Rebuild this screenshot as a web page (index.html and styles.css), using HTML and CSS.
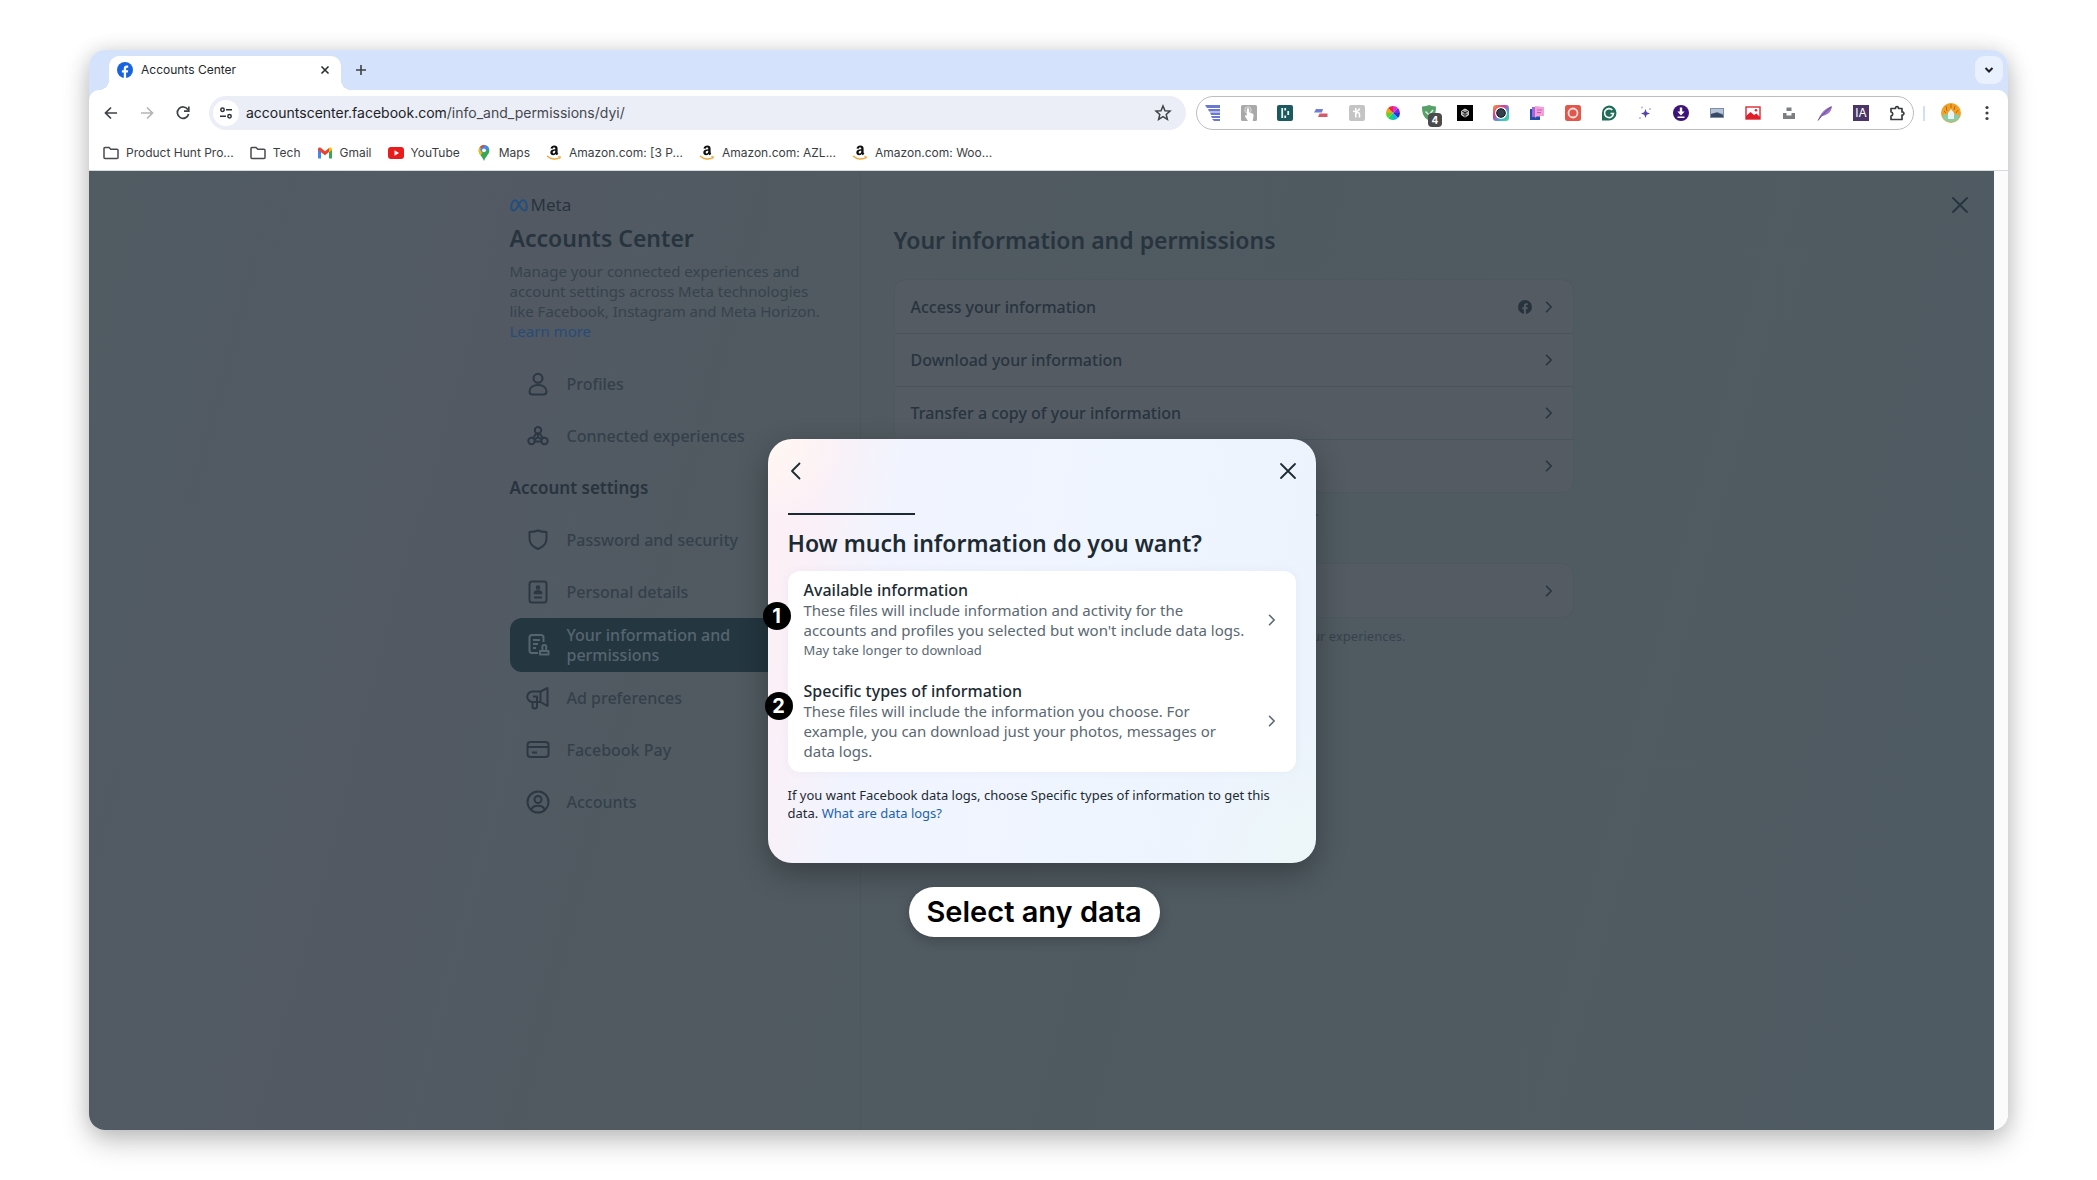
FILE: index.html
```html
<!DOCTYPE html>
<html lang="en">
<head>
<meta charset="utf-8">
<title>Accounts Center</title>
<link rel="stylesheet" href="styles.css">
</head>
<body>
<svg class="sprite" aria-hidden="true">
  <symbol id="chevron" viewBox="0 0 16 16"><path d="M5.500 3.300 10.200 8l-4.700 4.700" fill="none" stroke="currentColor" stroke-width="1.600" stroke-linecap="round" stroke-linejoin="round"/></symbol>
  <symbol id="cross" viewBox="0 0 18 18"><path d="M2 2l14 14M16 2 2 16" fill="none" stroke="currentColor" stroke-width="1.800" stroke-linecap="round"/></symbol>
  <symbol id="folder" viewBox="0 0 16 16"><path d="M1 3.500a1 1 0 0 1 1-1h4l1.800 1.800H14a1 1 0 0 1 1 1v7.200a1 1 0 0 1-1 1H2a1 1 0 0 1-1-1z" fill="none" stroke="#474a4e" stroke-width="1.500"/></symbol>
  <symbol id="facebook" viewBox="0 0 16 16"><circle cx="8" cy="8" r="8" fill="currentColor"/><path d="M6.800 16v-5.400H4.900V8.200h1.900V6.700c0-2 1.100-3.100 2.900-3.100.6 0 1.200.1 1.500.2v2h-1c-.8 0-1.100.4-1.100 1.100v1.300h2.100l-.4 2.400H9.100V16z" fill="var(--mark)"/></symbol>
  <symbol id="amazon" viewBox="0 0 16 16"><path d="M9.300 4.200c0-1-.2-1.600-1.200-1.600-.9 0-1.300.5-1.400 1.200l-2.200-.2C4.800 1.500 6.500.6 8.300.6c2.200 0 3.300 1.100 3.300 3.100v3.200c0 .9.300 1.200.8 1.900L10.700 10.200c-.4-.3-.8-.8-1-1.200-.7.8-1.400 1.200-2.500 1.200-1.700 0-2.900-1-2.900-2.700 0-2.300 1.900-3.200 5-3.300zm0 1.600c-1.700 0-2.600.5-2.600 1.500 0 .8.400 1.200 1 1.200 1.100 0 1.600-.9 1.600-2.700z" fill="#111"/><path d="M1.500 11.300c3.500 3.400 9 3.600 12.500 1.200" fill="none" stroke="#f1a93b" stroke-width="1.500" stroke-linecap="round"/><path d="M12.300 11.500c1.400-.4 2.200-.1 2.100.3 0 .6-.3 1.300-.8 1.900" fill="none" stroke="#f1a93b"/></symbol>
</svg>

<div class="window">
  <header class="chrome">
    <div class="tabstrip">
      <div class="tab">
        <svg class="favicon" width="16" height="16"><use href="#facebook"/></svg>
        <span class="tab-title">Accounts Center</span>
        <button class="plain" type="button" aria-label="Close tab"><svg width="10" height="10" viewBox="0 0 10 10"><path d="M1.500 1.500l7 7M8.500 1.500l-7 7" stroke="#2b2d30" stroke-width="1.600"/></svg></button>
      </div>
      <button class="plain" type="button" aria-label="New tab"><svg width="12" height="12" viewBox="0 0 12 12"><path d="M6 1v10M1 6h10" stroke="#3c4043" stroke-width="1.600"/></svg></button>
      <button class="tab-search" type="button" aria-label="Search tabs"><svg width="10" height="10" viewBox="0 0 10 10"><path d="M1.500 3 5 6.500 8.500 3" fill="none" stroke="#202124" stroke-width="2"/></svg></button>
    </div>

    <div class="toolbar">
      <div class="nav-buttons">
        <button class="plain" type="button" aria-label="Back"><svg width="16" height="16" viewBox="0 0 16 16"><path d="M14 8H3M8 2.500 2.500 8 8 13.500" fill="none" stroke="#3f4246" stroke-width="1.700"/></svg></button>
        <button class="plain" type="button" aria-label="Forward"><svg width="16" height="16" viewBox="0 0 16 16"><path d="M2 8h11M8 2.500 13.500 8 8 13.500" fill="none" stroke="#b3b5b8" stroke-width="1.700"/></svg></button>
        <button class="plain" type="button" aria-label="Reload"><svg width="16" height="16" viewBox="0 0 16 16"><path d="M13 4.800A5.700 5.700 0 1 0 13.600 9" fill="none" stroke="#3f4246" stroke-width="1.700"/><path d="M13.800 1.500v4.700H9" fill="none" stroke="#3f4246" stroke-width="1.700"/></svg></button>
      </div>
      <div class="omnibox">
        <span class="site-info"><svg width="14" height="14" viewBox="0 0 14 14" fill="none" stroke="#2f3236" stroke-width="1.500"><circle cx="3.500" cy="3.700" r="1.700"/><path d="M7 3.700h6M1 10.300h6"/><circle cx="10.500" cy="10.300" r="1.700"/></svg></span>
        <span class="url">accountscenter.facebook.com<span class="path">/info_and_permissions/dyi/</span></span>
        <button class="plain" type="button" aria-label="Bookmark this tab"><svg width="18" height="18" viewBox="0 0 18 18"><path d="M9 2l2 4.700 5 .4-3.800 3.300 1.200 5L9 12.700l-4.400 2.700 1.200-5L2 7.100l5-.4z" fill="none" stroke="#3f4246" stroke-width="1.500"/></svg></button>
      </div>
      <div class="extensions">
        <svg width="16" height="16" viewBox="0 0 16 16"><g fill="#6b78d0"><path d="M0 0h15v3H2zM3 4h12v2.500H4zM5 7.600h10V10H6zM6 11h9v2H7zM7 14h8v2H9z"/></g></svg>
        <svg width="16" height="16" viewBox="0 0 16 16"><rect width="16" height="16" rx="1.500" fill="#a9a9a9"/><circle cx="7" cy="5" r="3.200" fill="none" stroke="#ddd"/><path d="M5.800 4.500c0-1.600 2.400-1.600 2.400 0v3l3.300.9c1 .4 1.200 1.300 1 2.600L11.700 16H7L4 11.500c-.3-1.200.9-1.500 1.800-.7z" fill="#fff"/></svg>
        <svg width="16" height="16" viewBox="0 0 16 16"><rect width="16" height="16" rx="2" fill="#1d5a5f"/><path d="M5.200 3v10M8.200 3v2.500M8.200 10.500V13" stroke="#e8f5f3" stroke-width="1.800"/><path d="M11.200 6v4" stroke="#e8f5f3" stroke-width="1.800"/></svg>
        <svg width="16" height="16" viewBox="0 0 16 16"><path d="M3 4h7l-1 3.500H1z" fill="#6e7ed6"/><path d="M6.500 8.500h8v3.500H5z" fill="#d8596b"/></svg>
        <svg width="16" height="16" viewBox="0 0 16 16"><rect width="16" height="16" rx="2" fill="#c4c4c4"/><path d="M6.800 3v9.500M6.800 9c.8-2 3.700-2 3.700.2v3.300M4 6.300c3.500.5 6-.6 6.500-3" fill="none" stroke="#fff" stroke-width="1.500"/></svg>
        <svg width="16" height="16" viewBox="0 0 16 16"><path d="M8 8V1a7 7 0 0 1 5 2z" fill="#e22bd0"/><path d="M8 8l5-5a7 7 0 0 1 2 5z" fill="#7d2ae8"/><path d="M8 8h7a7 7 0 0 1-2 5z" fill="#2433d8"/><path d="M8 8l5 5a7 7 0 0 1-5 2z" fill="#12b6e8"/><path d="M8 8v7a7 7 0 0 1-5-2z" fill="#18cf7a"/><path d="M8 8l-5 5a7 7 0 0 1-2-5z" fill="#5ed422"/><path d="M8 8H1a7 7 0 0 1 2-5z" fill="#f0a316"/><path d="M8 8L3 3a7 7 0 0 1 5-2z" fill="#ea2c3a"/></svg>
        <span class="ext-badged"><svg width="16" height="16" viewBox="0 0 16 16"><path d="M1 1.500C4 1.500 6 .5 8 0c2 .5 4 1.500 7 1.500 0 6-1 11-7 14C2 12.500 1 7.500 1 1.500z" fill="#57a169"/><path d="M4.500 6.500 8 10l4-5" fill="none" stroke="#d9efdd" stroke-width="1.500"/></svg><span class="ext-count">4</span></span>
        <svg width="16" height="16" viewBox="0 0 16 16"><rect width="16" height="16" fill="#000"/><path d="M8 4l3.300 1.900v4.200L8 12l-3.300-1.900V5.900z" fill="#9a9a9a" stroke="#e4e4e4"/><path d="M5 6l3 1.800L11 6M8 8v4M6.300 9.300v.8M9.700 9.300v.8" fill="none" stroke="#111" stroke-width=".9"/></svg>
        <svg width="16" height="16" viewBox="0 0 16 16"><defs><linearGradient id="lens" x1="0" y1="0" x2="1" y2="1"><stop stop-color="#f7a324"/><stop offset=".35" stop-color="#e0389b"/><stop offset=".7" stop-color="#32b7e6"/><stop offset="1" stop-color="#5ddc74"/></linearGradient></defs><rect width="16" height="16" rx="3" fill="url(#lens)"/><circle cx="8" cy="8" r="6" fill="#fff"/><circle cx="8" cy="8" r="4.300" fill="#33414e" stroke="#111" stroke-width="1"/></svg>
        <svg width="16" height="16" viewBox="0 0 16 16"><path d="M1 4h4v8h6v3H1z" fill="#1f4ea8"/><path d="M3 2h8v10H3z" fill="#a963d8"/><path d="M6 1l9 1v9H8l-2 2z" fill="#f2a0d8"/><path d="M8 5h5M8 7.500h4" stroke="#c65cb8"/></svg>
        <svg width="16" height="16" viewBox="0 0 16 16"><rect width="16" height="16" rx="2.500" fill="#e2574b"/><circle cx="8" cy="8" r="4.500" fill="none" stroke="#fbe1dc" stroke-width="1.800"/></svg>
        <svg width="16" height="16" viewBox="0 0 16 16"><path d="M8 .5A7.500 7.500 0 1 1 8 15.500H1V8A7.500 7.500 0 0 1 8 .5z" fill="#1f6d58"/><path d="M11.300 5A4.500 4.500 0 1 0 12.500 8.500H9.500" fill="none" stroke="#fff" stroke-width="1.600"/></svg>
        <svg width="16" height="16" viewBox="0 0 16 16"><path d="M8.500 4l1.200 3.300L13 8.500l-3.300 1.200L8.500 13 7.300 9.700 4 8.500l3.300-1.200z" fill="#5540ae"/><g fill="#b9aee6"><circle cx="5" cy="2.500" r="1"/><circle cx="13" cy="4" r="1"/><circle cx="3" cy="13" r="1"/></g></svg>
        <svg width="16" height="16" viewBox="0 0 16 16"><circle cx="8" cy="8" r="8" fill="#3c1378"/><path d="M8 2.500v5" stroke="#fff" stroke-width="2.400"/><path d="M4.300 6.500h7.400L8 10.500z" fill="#fff"/><path d="M4.500 12.200h7" stroke="#fff" stroke-width="1.600"/></svg>
        <svg width="16" height="16" viewBox="0 0 16 16"><rect x="1" y="3" width="14" height="10" fill="#7d8ea8"/><path d="M2 4h12v5l-6-2-6 2z" fill="#b7c4d8"/><path d="M2 9l6-1.500L14 10v2H2z" fill="#374a63"/></svg>
        <svg width="16" height="16" viewBox="0 0 16 16"><rect x="1" y="2" width="14" height="12" fill="#fff" stroke="#d62b36" stroke-width="1.400"/><path d="M1 14v-3l4.500-4 3.500 3 2.500-1.500L15 12v2z" fill="#e01f2b"/><circle cx="11" cy="5.200" r="1.300" fill="#d62b36"/></svg>
        <svg width="16" height="16" viewBox="0 0 16 16"><path d="M5.500 2.500h5v3.500h-5zM2 8h3.500v2.500h5V8H14v6H2z" fill="#7c7f82"/></svg>
        <svg width="16" height="16" viewBox="0 0 16 16"><path d="M1 15.500C3 9 8 3 15 1c0 4-3 9-10 10z" fill="#9a77c4"/><path d="M1 15.500C5 10 9 6 14 2" fill="none" stroke="#5e3c8f" stroke-width=".9"/></svg>
        <span class="ext-ia">IA</span>
        <svg width="16" height="16" viewBox="0 0 16 16"><path d="M2 3.500h4.500c-.5-2.500 3.500-2.500 3 0h3.500v3.500c2.500-.5 2.500 3.500 0 3v4.500H2v-3.500c2.300-.3 2.300-3.700 0-4z" fill="none" stroke="#3a3c40" stroke-width="1.700" stroke-linejoin="round"/></svg>
      </div>
      <span class="divider"></span>
      <svg class="avatar" width="20" height="20" viewBox="0 0 20 20"><circle cx="10" cy="10" r="10" fill="#f2a126"/><path d="M1 13.500C4 10 6 12 8 11l5 0c2 0 4 .5 6 2.500A10 10 0 0 1 1 13.500z" fill="#8ccba6"/><path d="M10 6l3 4v6H7v-6z" fill="#e8f4f5"/><path d="M5 3l1 5M14 3l-1 4M10 1v4M3 8l2 2M17 7l-2 3" stroke="#b56a12"/></svg>
      <button class="plain" type="button" aria-label="Menu"><svg width="4" height="16" viewBox="0 0 4 16" fill="#3f4246"><circle cx="2" cy="2.500" r="1.600"/><circle cx="2" cy="8" r="1.600"/><circle cx="2" cy="13.500" r="1.600"/></svg></button>
    </div>

    <nav class="bookmarks">
      <a href="#"><svg width="16" height="16"><use href="#folder"/></svg>Product Hunt Pro...</a>
      <a href="#"><svg width="16" height="16"><use href="#folder"/></svg>Tech</a>
      <a href="#"><svg width="16" height="16" viewBox="0 0 16 16"><path d="M1 4v9.500h3V7z" fill="#4285f4"/><path d="M15 4v9.500h-3V7z" fill="#34a853"/><path d="M1 4.300C1 2.600 2.800 2 4 3l4 3.200L12 3v4L8 10.200 1 5z" fill="#ea4335"/><path d="M12 3c1.200-1 3-.4 3 1.300V5l-3 2.300z" fill="#fbbc04"/></svg>Gmail</a>
      <a href="#"><svg width="16" height="16" viewBox="0 0 16 16"><rect y="2" width="16" height="12" rx="3" fill="#e81c1c"/><path d="M6.500 5.300 11 8l-4.500 2.700z" fill="#fff"/></svg>YouTube</a>
      <a href="#"><svg width="16" height="16" viewBox="0 0 16 16"><path d="M8 0a5.300 5.300 0 0 1 5.300 5.400C13.300 9.500 9.500 11 8 16 6.500 11 2.700 9.500 2.700 5.400A5.300 5.300 0 0 1 8 0z" fill="#34a853"/><path d="M2.700 5.400A5.300 5.300 0 0 1 4 2l4 3.400-3.600 5C3.300 8.800 2.700 7.500 2.700 5.400z" fill="#fbbc04"/><path d="M4 2A5.300 5.300 0 0 1 8 0l1.500.2L6 4z" fill="#ea4335"/><path d="M9.500.2c2 .6 3.800 2.600 3.800 5.200L10 4 6 8l-2-4z" fill="#4285f4"/><circle cx="8" cy="5.300" r="1.900" fill="#fff"/></svg>Maps</a>
      <a href="#"><svg width="16" height="16"><use href="#amazon"/></svg>Amazon.com: [3 P...</a>
      <a href="#"><svg width="16" height="16"><use href="#amazon"/></svg>Amazon.com: AZL...</a>
      <a href="#"><svg width="16" height="16"><use href="#amazon"/></svg>Amazon.com: Woo...</a>
    </nav>
  </header>

  <div class="viewport">
    <div class="page">
      <div class="columns">
        <aside class="sidebar">
          <div class="meta"><svg width="18" height="13" viewBox="0 0 18 13"><path d="M1.200 8.500C1.200 5 2.700 1.300 5 1.300c3.500 0 5.200 10.200 9.300 10.200 1.700 0 2.500-1.300 2.500-3.500 0-3.700-1.500-6.700-3.800-6.700-3.800 0-5.300 10.200-9.300 10.200-1.700 0-2.500-1-2.500-3z" fill="none" stroke="#244f7d" stroke-width="2"/></svg>Meta</div>
          <h1>Accounts Center</h1>
          <p>Manage your connected experiences and account settings across Meta technologies like Facebook, Instagram and Meta Horizon. <a href="#">Learn more</a></p>
          <nav class="menu">
            <a href="#"><svg viewBox="0 0 24 24"><circle cx="12" cy="6.300" r="4.500"/><path d="M3.500 19.500c0-4 3.500-6.500 8.500-6.500s8.500 2.500 8.500 6.500c0 2-1 3-3 3h-11c-2 0-3-1-3-3z"/></svg>Profiles</a>
            <a href="#"><svg viewBox="0 0 24 24"><circle cx="12" cy="6.300" r="3.200"/><circle cx="5.500" cy="17" r="3.200"/><circle cx="18.500" cy="17" r="3.200"/><path d="M10.500 9.300 7 14M13.500 9.300 17 14M8.700 17.500h6.600M12 9.500V13M12 13l-3.500 2.500M12 13l3.500 2.500"/></svg>Connected experiences</a>
            <h2>Account settings</h2>
            <a href="#"><svg viewBox="0 0 24 24"><path d="M12 2.500c3 1.300 5.500 1.500 8.500 1.500v6.500c0 5-3.500 8.500-8.500 10.500-5-2-8.500-5.500-8.500-10.500V4c3 0 5.500-.2 8.500-1.500z"/></svg>Password and security</a>
            <a href="#"><svg viewBox="0 0 24 24"><rect x="3.500" y="1.500" width="17" height="21" rx="2.500"/><circle cx="12" cy="7.500" r="1.300"/><path d="M8.500 13.300c.5-3 6.500-3 7 0zM8 17.500h8"/></svg>Personal details</a>
            <a href="#" class="current" aria-current="page"><svg viewBox="0 0 24 24"><path d="M12 20H6c-1.500 0-2.500-1-2.500-2.500v-13C3.500 3 4.500 2 6 2h9c1.500 0 2.500 1 2.500 2.500V9M7 7h7M7 11h5M7 15h3"/><path d="M14 21.500V18h8.500v3.500zM16.300 18c.6-1.500 0-2.500 0-4 0-2.700 4-2.700 4 0 0 1.500-.6 2.500 0 4"/></svg>Your information and permissions</a>
            <a href="#"><svg viewBox="0 0 24 24"><path d="M14.500 5.500 21.500 2v18l-7-4H6.500a5 5 0 0 1 0-10.500zM14.500 5.500V16M6.500 16v4.500c0 2.500 4.500 2.500 4.500 0V10.500H7"/></svg>Ad preferences</a>
            <a href="#"><svg viewBox="0 0 24 24"><rect x="1.500" y="4" width="21" height="15" rx="3"/><path d="M1.500 9h21M6 14.500h5"/></svg>Facebook Pay</a>
            <a href="#"><svg viewBox="0 0 24 24"><circle cx="12" cy="12" r="10.500"/><circle cx="12" cy="9.500" r="3.500"/><path d="M5.500 19.500c1.500-5 11.500-5 13 0"/></svg>Accounts</a>
          </nav>
        </aside>

        <main class="content">
          <h1>Your information and permissions</h1>
          <div class="list">
            <a href="#"><span>Access your information</span><svg class="fb" width="14" height="14"><use href="#facebook"/></svg><svg width="16" height="16"><use href="#chevron"/></svg></a>
            <a href="#"><span>Download your information</span><svg width="16" height="16"><use href="#chevron"/></svg></a>
            <a href="#"><span>Transfer a copy of your information</span><svg width="16" height="16"><use href="#chevron"/></svg></a>
            <a href="#" aria-label="Search history"><span></span><svg width="16" height="16"><use href="#chevron"/></svg></a>
          </div>
          <p class="caption short">View, download or transfer your information and activity on our apps.</p>
          <div class="list">
            <a href="#" aria-label="Your activity"><span></span><svg width="16" height="16"><use href="#chevron"/></svg></a>
          </div>
          <p class="caption long">Control what information Meta technologies can use to influence your experiences.</p>
        </main>
      </div>

      <button class="plain page-close" type="button" aria-label="Close"><svg width="18" height="18"><use href="#cross"/></svg></button>

      <div class="overlay">
        <section class="dialog" role="dialog" aria-labelledby="dialog-title">
          <div class="dialog-bar">
            <button class="plain" type="button" aria-label="Back"><svg width="18" height="18" viewBox="0 0 18 18"><path d="M12.500 1.500 5 9l7.500 7.500" fill="none" stroke="currentColor" stroke-width="1.800" stroke-linecap="round" stroke-linejoin="round"/></svg></button>
            <button class="plain" type="button" aria-label="Close"><svg width="18" height="18"><use href="#cross"/></svg></button>
          </div>
          <div class="progress"></div>
          <h2 id="dialog-title">How much information do you want?</h2>
          <div class="options">
            <a href="#"><span class="option-text"><strong>Available information</strong><span>These files will include information and activity for the accounts and profiles you selected but won't include data logs.</span><small>May take longer to download</small></span><svg width="16" height="16"><use href="#chevron"/></svg></a>
            <a href="#"><span class="option-text"><strong>Specific types of information</strong><span>These files will include the information you choose. For example, you can download just your photos, messages or data logs.</span></span><svg width="16" height="16"><use href="#chevron"/></svg></a>
          </div>
          <p>If you want Facebook data logs, choose Specific types of information to get this data. <a href="#">What are data logs?</a></p>
          <span class="step step-one">1</span>
          <span class="step step-two">2</span>
          <span class="callout">Select any data</span>
        </section>
      </div>
    </div>
  </div>
</div>
</body>
</html>
```
FILE: styles.css
```css
* { box-sizing: border-box; }

body {
  margin: 0;
  padding: 50px 89px;
  background: #fff;
  font-family: Inter, "Liberation Sans", sans-serif;
}

h1, h2, p { margin: 0; }
a { color: inherit; text-decoration: none; }
svg { display: block; flex: none; }
.sprite { position: absolute; width: 0; height: 0; }

.plain {
  display: flex;
  padding: 0;
  border: 0;
  background: none;
  color: inherit;
}

.window {
  display: flex;
  flex-direction: column;
  min-height: calc(100vh - 100px);
  border-radius: 16px;
  overflow: hidden;
  background: #fff;
  box-shadow: 0 12px 28px rgba(0, 0, 0, .22), 0 0 20px rgba(0, 0, 0, .12);
}

/* Browser chrome */
.chrome { border-bottom: 1px solid #d5dae2; background: #d4e2fc; }

.tabstrip {
  display: flex;
  align-items: center;
  height: 40px;
  padding: 6px 5px 0 20px;
  gap: 14px;
}
.tab {
  position: relative;
  display: flex;
  align-items: center;
  gap: 8px;
  width: 232px;
  height: 34px;
  padding: 0 11px 6px 8px;
  border-radius: 10px 10px 0 0;
  background: #fff;
}
.tab::before, .tab::after {
  content: "";
  position: absolute;
  bottom: 0;
  width: 10px;
  height: 10px;
}
.tab::before { left: -10px; background: radial-gradient(circle at 0 0, transparent 10px, #fff 10px); }
.tab::after { right: -10px; background: radial-gradient(circle at 100% 0, transparent 10px, #fff 10px); }
.favicon { color: #1864e0; --mark: #fff; }
.tab-title { flex: 1; font-size: 12px; line-height: 14px; color: #26282b; }
.tabstrip > .plain { padding-bottom: 6px; }
.tab-search {
  display: flex;
  align-items: center;
  justify-content: center;
  align-self: flex-start;
  width: 28px;
  height: 28px;
  margin-left: auto;
  padding: 0;
  border: 0;
  border-radius: 9px;
  background: #eaf1fe;
}

.toolbar {
  display: flex;
  align-items: center;
  height: 46px;
  padding: 0 19px 0 14px;
  border-radius: 10px 10px 0 0;
  background: #fff;
}
.nav-buttons { display: flex; gap: 20px; margin-right: 18px; }
.omnibox {
  display: flex;
  align-items: center;
  flex: 1;
  height: 34px;
  padding: 0 14px 0 4px;
  border-radius: 17px;
  background: #ebeef7;
}
.site-info {
  display: flex;
  align-items: center;
  justify-content: center;
  width: 26px;
  height: 26px;
  margin-right: 7px;
  border-radius: 50%;
  background: #fff;
}
.url { flex: 1; font-size: 14px; line-height: 18px; color: #202226; }
.path { color: #45484d; }

.extensions {
  display: flex;
  align-items: center;
  gap: 20px;
  height: 34px;
  margin-left: 10px;
  padding: 0 8px;
  border: 1px solid #bcbdc2;
  border-radius: 17px;
}
.ext-badged { position: relative; }
.ext-count {
  position: absolute;
  left: 7px;
  top: 8px;
  width: 14px;
  height: 14px;
  border-radius: 4px;
  background: #4b4b4d;
  color: #fff;
  font-size: 10px;
  font-weight: 700;
  line-height: 14px;
  text-align: center;
}
.ext-ia {
  width: 16px;
  height: 16px;
  background: #4b3567;
  color: #fff;
  font-size: 12px;
  line-height: 16px;
  text-align: center;
}
.divider { width: 2px; height: 15px; margin: 0 16px 0 9px; background: #cfe0f7; }
.avatar { margin-right: 24px; }

.bookmarks {
  display: flex;
  align-items: center;
  gap: 16px;
  height: 34px;
  padding: 0 14px;
  background: #fff;
  font-size: 12px;
  line-height: 14px;
  color: #3b3e42;
}
.bookmarks a { display: flex; align-items: center; gap: 7px; }

/* Page behind the dialog */
.viewport {
  display: flex;
  flex: 1;
  padding-right: 14px;
  background: #fbfbfb;
}
.page {
  position: relative;
  display: flex;
  flex: 1;
  justify-content: center;
  background: linear-gradient(105deg, #505b62 0%, #525a63 14%, #525963 22%, #505a60 36%, #4f5b62 100%);
  color: #27343e;
  font-family: "Noto Sans", "Liberation Sans", sans-serif;
}
.columns { display: flex; width: 1064px; }
.page h1 { font-size: 23px; line-height: 30px; font-weight: 600; }

.sidebar {
  width: 351px;
  padding: 24px 16px 0 0;
  border-right: 1px solid #4b565e;
}
.meta {
  display: flex;
  align-items: center;
  gap: 3px;
  margin-bottom: 8px;
  font-size: 17px;
  line-height: 20px;
}
.sidebar > p { width: 316px; margin-top: 8px; font-size: 15px; line-height: 20px; color: #36434c; }
.sidebar > p a { color: #264d78; }
.menu { margin-top: 17px; }
.menu h2 { padding: 16px 0; font-size: 17px; line-height: 20px; font-weight: 600; }
.menu a {
  display: flex;
  align-items: center;
  gap: 17px;
  min-height: 52px;
  padding: 7px 60px 7px 16px;
  border-radius: 12px;
  font-size: 16px;
  line-height: 20px;
  font-weight: 500;
  color: #33404a;
}
.menu svg {
  width: 24px;
  height: 24px;
  fill: none;
  stroke: #2b3843;
  stroke-width: 2;
  stroke-linejoin: round;
}
.menu .current { background: #243640; color: #56656f; }
.menu .current svg { stroke: #56656f; }

.content { flex: 1; padding: 54px 0 0 33px; }
.list {
  margin-top: 24px;
  border: 1px solid #4d585f;
  border-radius: 12px;
  background: #545b63;
}
.list a {
  display: flex;
  align-items: center;
  gap: 9px;
  height: 53px;
  padding: 0 16px;
  font-size: 16px;
  font-weight: 500;
}
.list a + a { border-top: 1px solid #4a545b; }
.list span { flex: 1; }
.fb { --mark: #545b63; }
.caption {
  padding: 8px 0;
  color: #36434c;
  font-size: 13px;
  line-height: 20px;
  white-space: nowrap;
  text-align: right;
}
.caption.short { width: 425px; }
.caption.long { width: 512px; }
.caption + .list { margin-top: 34px; }

.page-close { position: absolute; top: 25px; right: 25px; }

/* Dialog */
.overlay {
  position: absolute;
  inset: 0;
  display: flex;
  align-items: center;
  justify-content: center;
}
.dialog {
  position: relative;
  width: 548px;
  padding: 23px 20px 41px;
  border-radius: 24px;
  background:
    radial-gradient(circle at 0 0, #fff8f2 0, rgba(255, 248, 242, 0) 80px),
    radial-gradient(circle at 100% 100%, #edf7f7 0, rgba(237, 247, 247, 0) 140px),
    linear-gradient(100deg, #fdf0f5 0%, #fbf0f7 9%, #f1f4fe 22%, #eff5ff 60%, #ecf3fd 100%);
  box-shadow: 0 10px 30px rgba(0, 0, 0, .3);
  color: #1c2b33;
}
.dialog-bar { display: flex; justify-content: space-between; margin: 0 -1px; }
.progress { width: 127px; height: 2px; margin-top: 33px; background: #1c2b33; }
.dialog h2 { margin-top: 13px; font-size: 23px; line-height: 30px; font-weight: 600; }
.options {
  display: grid;
  gap: 1px;
  margin-top: 13px;
  border-radius: 12px;
  background: #fff;
  box-shadow: 0 0 10px rgba(60, 80, 140, .06);
}
.options a {
  display: flex;
  align-items: center;
  gap: 14px;
  padding: 9px 16px 11px;
  color: #5a6872;
}
.option-text { display: grid; flex: 1; font-size: 15px; line-height: 20px; }
.option-text strong { color: #1c2b33; font-size: 16px; font-weight: 500; }
.option-text small { font-size: 13px; }
.dialog p { margin-top: 14px; font-size: 13px; line-height: 18px; }
.dialog p a { color: #1a63ad; }

/* Annotations */
.step {
  position: absolute;
  left: -5px;
  width: 28px;
  height: 28px;
  border-radius: 50%;
  background: #000;
  color: #fff;
  font-family: Inter, sans-serif;
  font-size: 20px;
  font-weight: 700;
  line-height: 28px;
  text-align: center;
}
.step-one { top: 163px; }
.step-two { top: 253px; left: -3px; }
.callout {
  position: absolute;
  left: 141px;
  top: calc(100% + 24px);
  padding: 7px 18px;
  border-radius: 25px;
  background: #fff;
  color: #000;
  font-family: Inter, sans-serif;
  font-size: 29px;
  font-weight: 600;
  line-height: 36px;
  white-space: nowrap;
  box-shadow: 0 4px 12px rgba(0, 0, 0, .2);
}
```
